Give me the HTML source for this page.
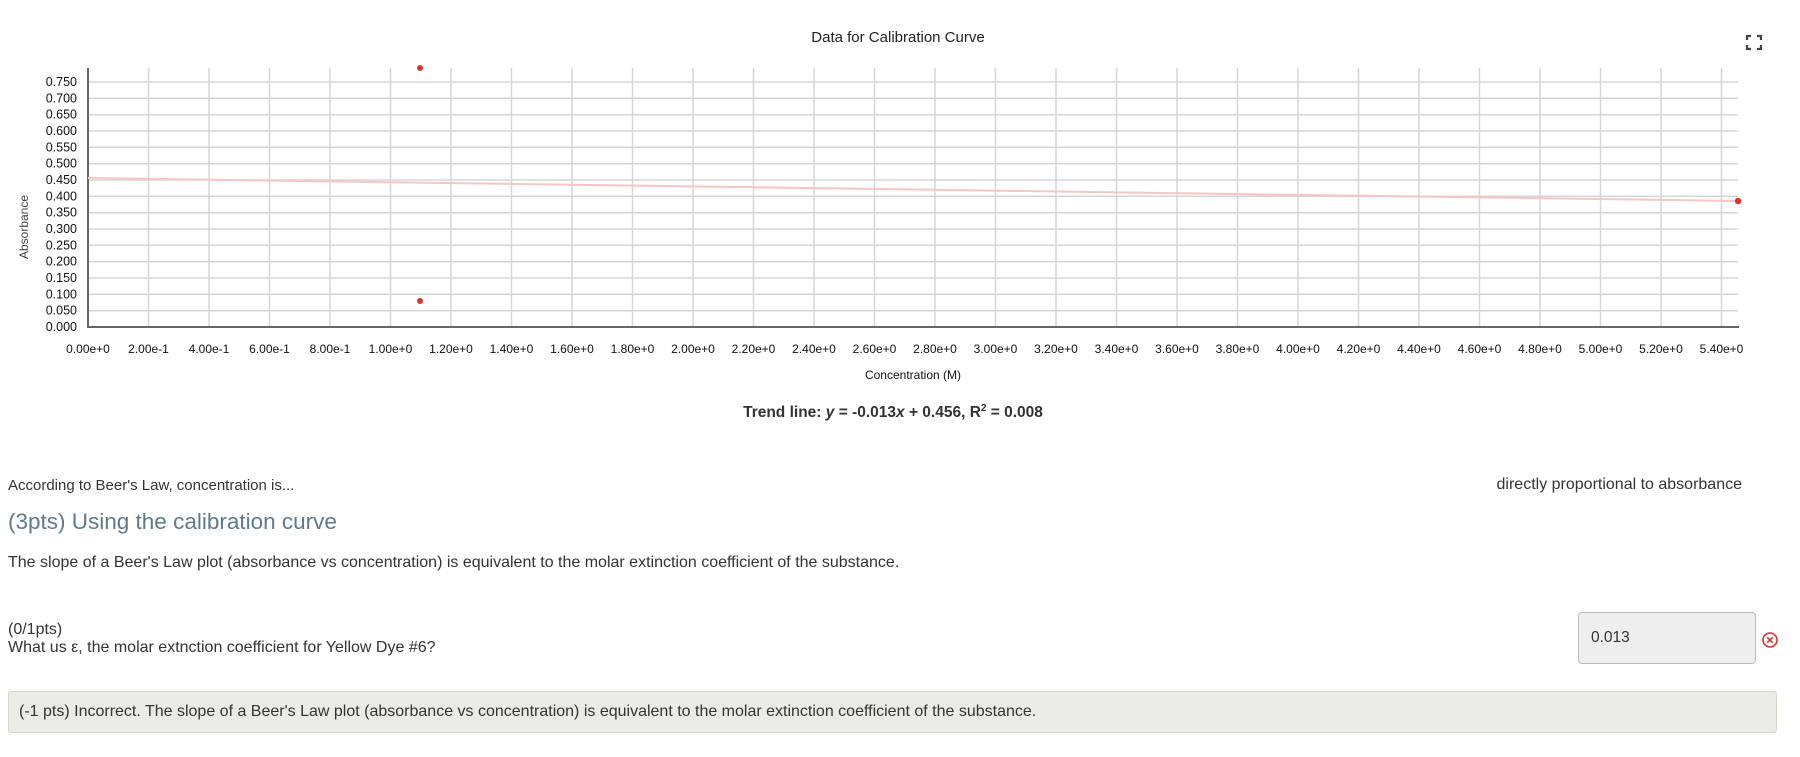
<!DOCTYPE html>
<html><head><meta charset="utf-8"><style>
body{margin:0;width:1800px;height:757px;background:#fff;font-family:"Liberation Sans",sans-serif;color:#333;position:relative;overflow:hidden}
.a{position:absolute;white-space:nowrap}
</style></head><body>
<svg class="a" style="left:0;top:0" width="1800" height="440" font-family="Liberation Sans, sans-serif">
<text x="898" y="42" font-size="15" text-anchor="middle" fill="#222">Data for Calibration Curve</text>
<g fill="none" stroke="#444" stroke-width="2.2">
<path d="M1747 40v-4h4M1757 36h4v4M1761 45v4h-4M1751 49h-4v-4"/>
</g>
<g stroke="#d6d6d6" stroke-width="1.5">
<line x1="88" y1="82" x2="1738" y2="82"/><line x1="88" y1="98.3" x2="1738" y2="98.3"/><line x1="88" y1="114.7" x2="1738" y2="114.7"/><line x1="88" y1="131" x2="1738" y2="131"/><line x1="88" y1="147.3" x2="1738" y2="147.3"/><line x1="88" y1="163.7" x2="1738" y2="163.7"/><line x1="88" y1="180" x2="1738" y2="180"/><line x1="88" y1="196.3" x2="1738" y2="196.3"/><line x1="88" y1="212.7" x2="1738" y2="212.7"/><line x1="88" y1="229" x2="1738" y2="229"/><line x1="88" y1="245.3" x2="1738" y2="245.3"/><line x1="88" y1="261.7" x2="1738" y2="261.7"/><line x1="88" y1="278" x2="1738" y2="278"/><line x1="88" y1="294.3" x2="1738" y2="294.3"/><line x1="88" y1="310.7" x2="1738" y2="310.7"/>
</g>
<g id="v" stroke="#d6d6d6" stroke-width="1.5"></g>
<line x1="88" y1="68" x2="88" y2="328" stroke="#666" stroke-width="2"/>
<line x1="87" y1="327" x2="1739" y2="327" stroke="#666" stroke-width="2"/>
<line x1="88" y1="178" x2="1738" y2="201" stroke="#f5c6c6" stroke-width="2"/>
<circle cx="420" cy="68" r="3" fill="#e03030"/>
<circle cx="420" cy="301" r="3" fill="#e03030"/>
<circle cx="1738" cy="201" r="3.2" fill="#e03030"/>
<g font-size="12.5" fill="#111" text-anchor="end" id="yl"></g>
<g font-size="12" fill="#111" text-anchor="middle" id="xl"></g>
<text x="28" y="227" font-size="12" fill="#444" text-anchor="middle" transform="rotate(-90 28 227)">Absorbance</text>
<text x="913" y="379" font-size="12" fill="#111" text-anchor="middle">Concentration (M)</text>
<text x="893" y="417" font-size="15.5" font-weight="bold" fill="#333" text-anchor="middle">Trend line: <tspan font-style="italic">y</tspan> = -0.013<tspan font-style="italic">x</tspan> + 0.456,  R<tspan dy="-6" font-size="10">2</tspan><tspan dy="6"> = 0.008</tspan></text>
</svg>
<script>
var ns="http://www.w3.org/2000/svg",v=document.getElementById('v'),xl=document.getElementById('xl'),yl=document.getElementById('yl');
for(var i=0;i<=27;i++){var x=88+i*60.5;if(i>0){var l=document.createElementNS(ns,'line');l.setAttribute('x1',x);l.setAttribute('x2',x);l.setAttribute('y1',68);l.setAttribute('y2',327);v.appendChild(l);}
var t=document.createElementNS(ns,'text');t.setAttribute('x',x);t.setAttribute('y',353);var val=i*0.2;var s;if(i==0)s='0.00e+0';else if(i<5)s=(val*10).toFixed(2)+'e-1';else s=val.toFixed(2)+'e+0';t.textContent=s;xl.appendChild(t);}
for(var j=0;j<=15;j++){var y=327-j*16.33;var t=document.createElementNS(ns,'text');t.setAttribute('x',77);t.setAttribute('y',y+4);t.textContent=(j*0.05).toFixed(3);yl.appendChild(t);}
</script>
<div class="a" style="left:8px;top:477px;font-size:15px">According to Beer's Law, concentration is...</div>
<div class="a" style="right:58px;top:476px;font-size:16px">directly proportional to absorbance</div>
<div class="a" style="left:8px;top:509px;font-size:22.5px;color:#5f7a89">(3pts) Using the calibration curve</div>
<div class="a" style="left:8px;top:554px;font-size:16px">The slope of a Beer's Law plot (absorbance vs concentration) is equivalent to the molar extinction coefficient of the substance.</div>
<div class="a" style="left:8px;top:621px;font-size:16px;line-height:18px">(0/1pts)<br>What us ε, the molar extnction coefficient for Yellow Dye #6?</div>
<div class="a" style="left:1578px;top:612px;width:178px;height:52px;background:#eee;border:1px solid #bbb;border-radius:4px;box-sizing:border-box;font-size:15.5px;line-height:50px;padding-left:12px">0.013</div>
<svg class="a" style="left:1761px;top:631px" width="18" height="18"><circle cx="9" cy="9" r="7" fill="none" stroke="#d93030" stroke-width="1.6"/><path d="M6.3 6.3l5.4 5.4M11.7 6.3l-5.4 5.4" stroke="#d93030" stroke-width="1.6"/></svg>
<div class="a" style="left:8px;top:691px;width:1769px;height:42px;background:#ebebe6;border:1.5px solid #d5d5cc;border-radius:3px;box-sizing:border-box;font-size:16px;line-height:39px;padding-left:10px">(-1 pts) Incorrect. The slope of a Beer's Law plot (absorbance vs concentration) is equivalent to the molar extinction coefficient of the substance.</div>
</body></html>
